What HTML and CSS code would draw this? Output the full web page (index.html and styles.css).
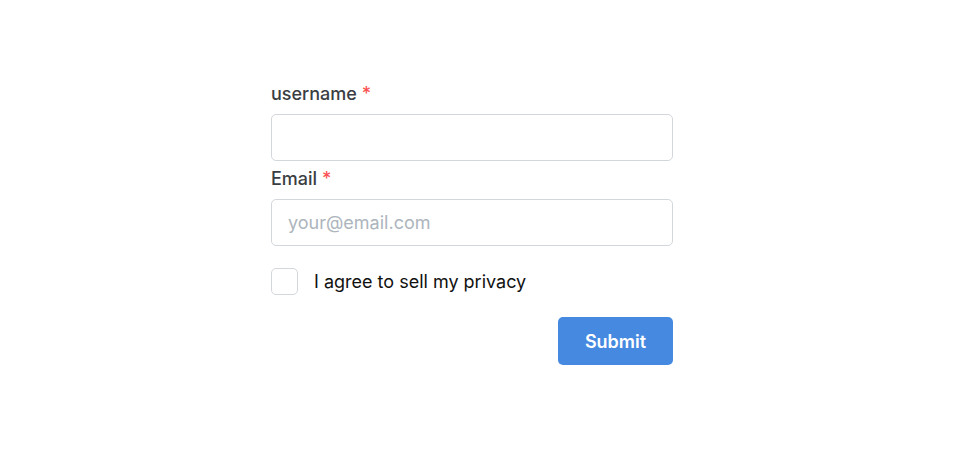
FILE: index.html
```html
<!DOCTYPE html>
<html>
<head>
<meta charset="utf-8">
<link rel="stylesheet" href="styles.css">
</head>
<body>
<form class="form">
  <div class="field">
    <label class="label">username <span class="req">*</span></label>
    <input class="input" type="text">
  </div>
  <div class="field">
    <label class="label">Email <span class="req">*</span></label>
    <input class="input" type="text" placeholder="your@email.com">
  </div>
  <label class="check">
    <span class="box"></span>
    <span class="check-label">I agree to sell my privacy</span>
  </label>
  <div class="actions">
    <button class="btn" type="button">Submit</button>
  </div>
</form>
</body>
</html>
```
FILE: styles.css
```css
html, body {
  margin: 0;
  padding: 0;
  background: #fff;
}
body {
  font-family: Inter, "Noto Sans", sans-serif;
  color: #212529;
}
.form {
  width: 402px;
  margin-left: 271px;
  padding-top: 80px;
  display: flex;
  flex-direction: column;
}
.field {
  display: flex;
  flex-direction: column;
  margin-bottom: 4px;
}
.label {
  font-size: 18px;
  font-weight: 500;
  line-height: 28px;
  margin-bottom: 6px;
  color: #3a3d42;
}
.req {
  color: #fa5252;
}
.input {
  box-sizing: border-box;
  height: 47px;
  width: 100%;
  border: 1.5px solid #d3d7dc;
  border-radius: 5px;
  padding: 0 16px;
  font-family: inherit;
  font-size: 18px;
  color: #212529;
  outline: none;
}
.input::placeholder {
  color: #adb5bd;
}
.check {
  display: flex;
  align-items: center;
  gap: 16px;
  margin-top: 18px;
}
.box {
  box-sizing: border-box;
  width: 27px;
  height: 27px;
  border: 1.5px solid #d3d7dc;
  border-radius: 5px;
  background: #fff;
}
.check-label {
  font-size: 18px;
  color: #111;
}
.actions {
  display: flex;
  justify-content: flex-end;
  margin-top: 22px;
}
.btn {
  width: 115px;
  height: 48px;
  border: none;
  border-radius: 5px;
  background: #4589e0;
  color: #fff;
  font-family: inherit;
  font-size: 18px;
  font-weight: 600;
}
```
